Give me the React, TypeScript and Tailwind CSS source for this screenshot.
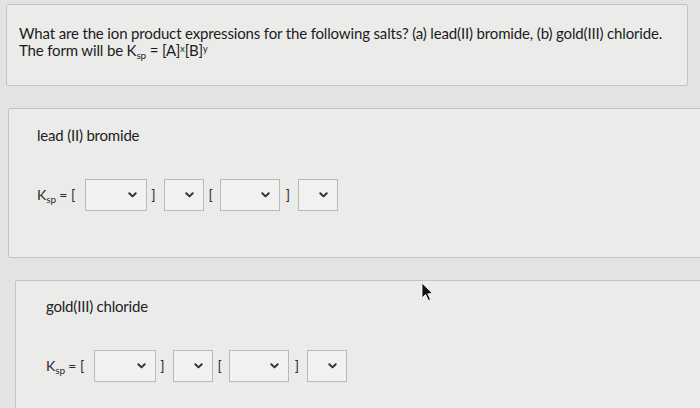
import React from 'react';

const Chevron = () => (
  <svg width="9" height="6" viewBox="0 0 9 6" className="shrink-0">
    <path d="M1.3 1.3 L4.5 4.4 L7.7 1.3" fill="none" stroke="#333" strokeWidth="2" strokeLinecap="round" strokeLinejoin="round" />
  </svg>
);

const Select = ({ w }: { w: string }) => (
  <div className={`${w} h-[32px] border border-[#b9b9b9] bg-[#f1f1f0] flex items-center justify-end pr-[9px]`}>
    <Chevron />
  </div>
);

const KspRow = () => (
  <div className="flex items-center text-[14px] text-[#2a2a2a]">
    <span className="mr-[3px]">
      K<sub className="text-[10px] align-baseline relative top-[3px]">sp</sub>
    </span>
    <span className="mr-[10px]">= [</span>
    <Select w="w-[62px]" />
    <span className="ml-[4px] mr-[8px]">]</span>
    <Select w="w-[40px]" />
    <span className="ml-[5px] mr-[7px]">[</span>
    <Select w="w-[60px]" />
    <span className="ml-[6px] mr-[8px]">]</span>
    <Select w="w-[40px]" />
  </div>
);

export default function App() {
  return (
    <div className="relative w-[700px] h-[408px] overflow-hidden bg-[#e3e3e1] font-['Lato',sans-serif]">
      <div className="ml-[6px] mt-[4px] w-[682px] h-[82px] border border-[#c4c4c4] rounded-[2px] bg-[#ebebea] pl-[12px] pt-[20px] text-[15px] leading-[17px] text-[#1c1c1c] tracking-[-0.15px]">
        <p>What are the ion product expressions for the following salts? (a) lead(II) bromide, (b) gold(III) chloride.</p>
        <p>
          The form will be K<sub className="text-[10px] align-baseline relative top-[3px]">sp</sub> = [A]<sup className="text-[9px]">x</sup>[B]<sup className="text-[9px]">y</sup>
        </p>
      </div>

      <div className="ml-[8px] mt-[22px] w-[720px] h-[150px] border border-[#c4c4c4] rounded-[2px] bg-[#ebebea] pl-[28px] pt-[15px]">
        <p className="text-[15px] text-[#222] tracking-[-0.2px]">lead (II) bromide</p>
        <div className="mt-[32px]">
          <KspRow />
        </div>
      </div>

      <div className="ml-[15px] mt-[22px] w-[720px] h-[160px] border border-[#c4c4c4] rounded-[2px] bg-[#ebebea] pl-[30px] pt-[14px]">
        <p className="text-[15px] text-[#222] tracking-[-0.2px]">gold(III) chloride</p>
        <div className="mt-[32px]">
          <KspRow />
        </div>
      </div>

      <svg className="absolute left-[421px] top-[282px]" width="14" height="20" viewBox="0 0 14 20">
        <path d="M1 1 L1 16 L4.5 12.5 L7.5 18.5 L9.5 17.5 L6.8 11.8 L11.5 11.5 Z" fill="#111" stroke="#fff" strokeWidth="0.8" />
      </svg>
    </div>
  );
}
